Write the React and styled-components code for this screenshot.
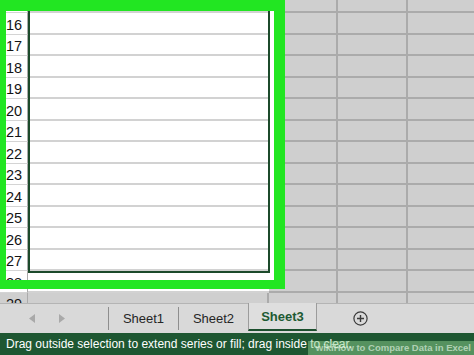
import React from "react";
import styled, { createGlobalStyle } from "styled-components";

const GREEN = "#22e622";
const ROW_H = 21.5;
const GRID = "#ababab";
const GRAY = "#cfcfcf";

const Global = createGlobalStyle`
  html, body { margin: 0; padding: 0; background: #fff; }
  body { width: 474px; height: 355px; overflow: hidden; font-family: "Liberation Sans", Arial, sans-serif; }
`;

const Page = styled.div`
  width: 474px;
  height: 355px;
  display: flex;
  flex-direction: column;
  overflow: hidden;
`;

const Sheet = styled.div`
  position: relative;
  height: 303px;
  flex: none;
  overflow: hidden;
  background: ${GRAY};
`;

const Row = styled.div`
  display: flex;
  flex: none;
`;

const RowHeader = styled.div`
  width: 28px;
  flex: none;
  box-sizing: border-box;
  background: ${(p) => (p.$light ? "#fff" : GRAY)};
  border-bottom: 1px solid ${(p) => (p.$light ? "#d4d4d4" : GRID)};
  border-right: 1px solid ${GRID};
  padding: 0 0 1px 6px;
  display: flex;
  align-items: flex-end;
  font-size: 14.5px;
  line-height: 16px;
  color: #141414;
  overflow: hidden;
`;

const Cell = styled.div`
  width: ${(p) => p.$w}px;
  flex: none;
  box-sizing: border-box;
  background: ${(p) => (p.$light ? "#fff" : GRAY)};
  border-bottom: 2px solid ${(p) => (p.$light ? "#d2d2d2" : GRID)};
  border-right: ${(p) => (p.$light ? "none" : `2px solid ${GRID}`)};
`;

const Selection = styled.div`
  position: absolute;
  left: 28px;
  top: 0;
  width: 242px;
  height: 273px;
  box-sizing: border-box;
  border: 2px solid #1c4a2b;
  border-top: none;
  box-shadow: 4px 7px 0 0 #fff;
  pointer-events: none;
`;

const Frame = styled.div`
  position: absolute;
  left: 0;
  top: 0;
  width: 285px;
  height: 289px;
  box-sizing: border-box;
  border-style: solid;
  border-color: ${GREEN};
  border-width: 11px 11px 9px 6px;
  pointer-events: none;
`;

const TabBar = styled.div`
  height: 30px;
  flex: none;
  box-sizing: border-box;
  background: #d9d9d9;
  border-top: 1px solid #b4b4b4;
  display: flex;
  align-items: center;
  font-size: 13px;
  color: #262626;
`;

const Nav = styled.div`
  width: 108px;
  flex: none;
  display: flex;
  align-items: center;
  gap: 24px;
  padding-left: 29px;
  box-sizing: border-box;
`;

const Arrow = styled.svg`
  width: 6px;
  height: 9px;
  display: block;
  fill: #a9a9a9;
`;

const Separator = styled.div`
  width: 1px;
  height: 23px;
  flex: none;
  background: #8e8e8e;
`;

const Tab = styled.div`
  width: ${(p) => p.$w}px;
  flex: none;
  text-align: center;
`;

const ActiveTab = styled.div`
  width: 69px;
  flex: none;
  align-self: stretch;
  margin-top: -1px;
  margin-bottom: 2px;
  box-sizing: border-box;
  display: flex;
  align-items: center;
  justify-content: center;
  background: #dedede;
  border-left: 1px solid #9c9c9c;
  border-right: 1px solid #9c9c9c;
  border-bottom: 2px solid #1c4f2e;
  font-weight: bold;
  color: #1d5a33;
`;

const AddButton = styled.svg`
  width: 15px;
  height: 15px;
  margin-left: 36px;
  display: block;
  flex: none;
`;

const StatusBar = styled.div`
  position: relative;
  flex: 1;
  background: #1e5732;
  color: #fff;
  font-size: 12px;
  display: flex;
  align-items: center;
  padding-left: 6px;
  white-space: nowrap;
  overflow: hidden;
`;

const Watermark = styled.div`
  position: absolute;
  right: 0;
  bottom: 0;
  width: 166px;
  height: 14px;
  background: rgba(140, 205, 140, 0.5);
  color: rgba(235, 250, 235, 0.62);
  font-size: 9.5px;
  font-weight: bold;
  line-height: 14px;
  text-align: right;
  padding-right: 3px;
  box-sizing: border-box;
`;

const COLS = [241, 69, 70, 70, 70];

const rows = [];
rows.push({ n: "", h: 13.3, light: true });
for (let i = 16; i <= 29; i++) rows.push({ n: String(i), h: ROW_H, light: i <= 28 });

export default function App() {
  return (
    <Page>
      <Global />
      <Sheet>
        {rows.map((r, idx) => (
          <Row key={idx} style={{ height: r.h }}>
            <RowHeader $light={r.light}>{r.n}</RowHeader>
            {COLS.map((w, c) => (
              <Cell key={c} $w={w} $light={r.light && c === 0} />
            ))}
          </Row>
        ))}
        <Selection />
        <Frame />
      </Sheet>
      <TabBar>
        <Nav>
          <Arrow viewBox="0 0 6 9">
            <path d="M6 0 L0 4.5 L6 9 Z" />
          </Arrow>
          <Arrow viewBox="0 0 6 9">
            <path d="M0 0 L6 4.5 L0 9 Z" />
          </Arrow>
        </Nav>
        <Separator />
        <Tab $w={69}>Sheet1</Tab>
        <Separator />
        <Tab $w={69}>Sheet2</Tab>
        <ActiveTab>Sheet3</ActiveTab>
        <AddButton viewBox="0 0 15 15">
          <circle cx="7.5" cy="7.5" r="6.6" fill="none" stroke="#3a3a3a" strokeWidth="1.2" />
          <path d="M7.5 4 V11 M4 7.5 H11" stroke="#3a3a3a" strokeWidth="1.4" />
        </AddButton>
      </TabBar>
      <StatusBar>
        Drag outside selection to extend series or fill; drag inside to clear.
        <Watermark>wikiHow to Compare Data in Excel</Watermark>
      </StatusBar>
    </Page>
  );
}
